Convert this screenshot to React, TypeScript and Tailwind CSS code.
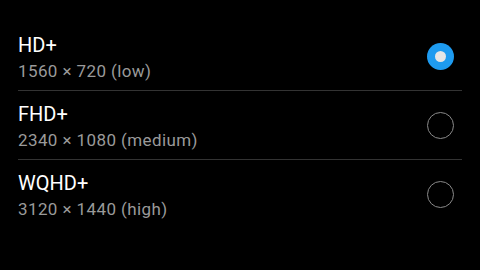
const options = [
  { name: 'HD+', res: '1560 × 720 (low)', selected: true },
  { name: 'FHD+', res: '2340 × 1080 (medium)', selected: false },
  { name: 'WQHD+', res: '3120 × 1440 (high)', selected: false },
];

export default function App() {
  return (
    <div className="w-[480px] h-[270px] bg-black pt-[22px] px-[18px]" style={{ fontFamily: 'Roboto, "Noto Sans", sans-serif' }}>
      {options.map((o, i) => (
        <div
          key={o.name}
          className={`h-[69px] flex items-center justify-between ${i < options.length - 1 ? 'border-b border-[#333333]' : ''}`}
        >
          <div className="self-start flex flex-col gap-[3px] pt-[11px]">
            <div className="text-[20px] leading-[24px] text-white">{o.name}</div>
            <div className="text-[17px] leading-[22px] tracking-[0.4px] text-[#9a9a9a]">{o.res}</div>
          </div>
          <div className="mr-[8px]">
            {o.selected ? (
              <div className="w-[27px] h-[27px] rounded-full bg-[#1e9bf0] flex items-center justify-center">
                <div className="w-[11px] h-[11px] rounded-full bg-[#e6e6e6]" />
              </div>
            ) : (
              <div className="w-[27px] h-[27px] rounded-full border border-[#8a8a8a]" />
            )}
          </div>
        </div>
      ))}
    </div>
  );
}
